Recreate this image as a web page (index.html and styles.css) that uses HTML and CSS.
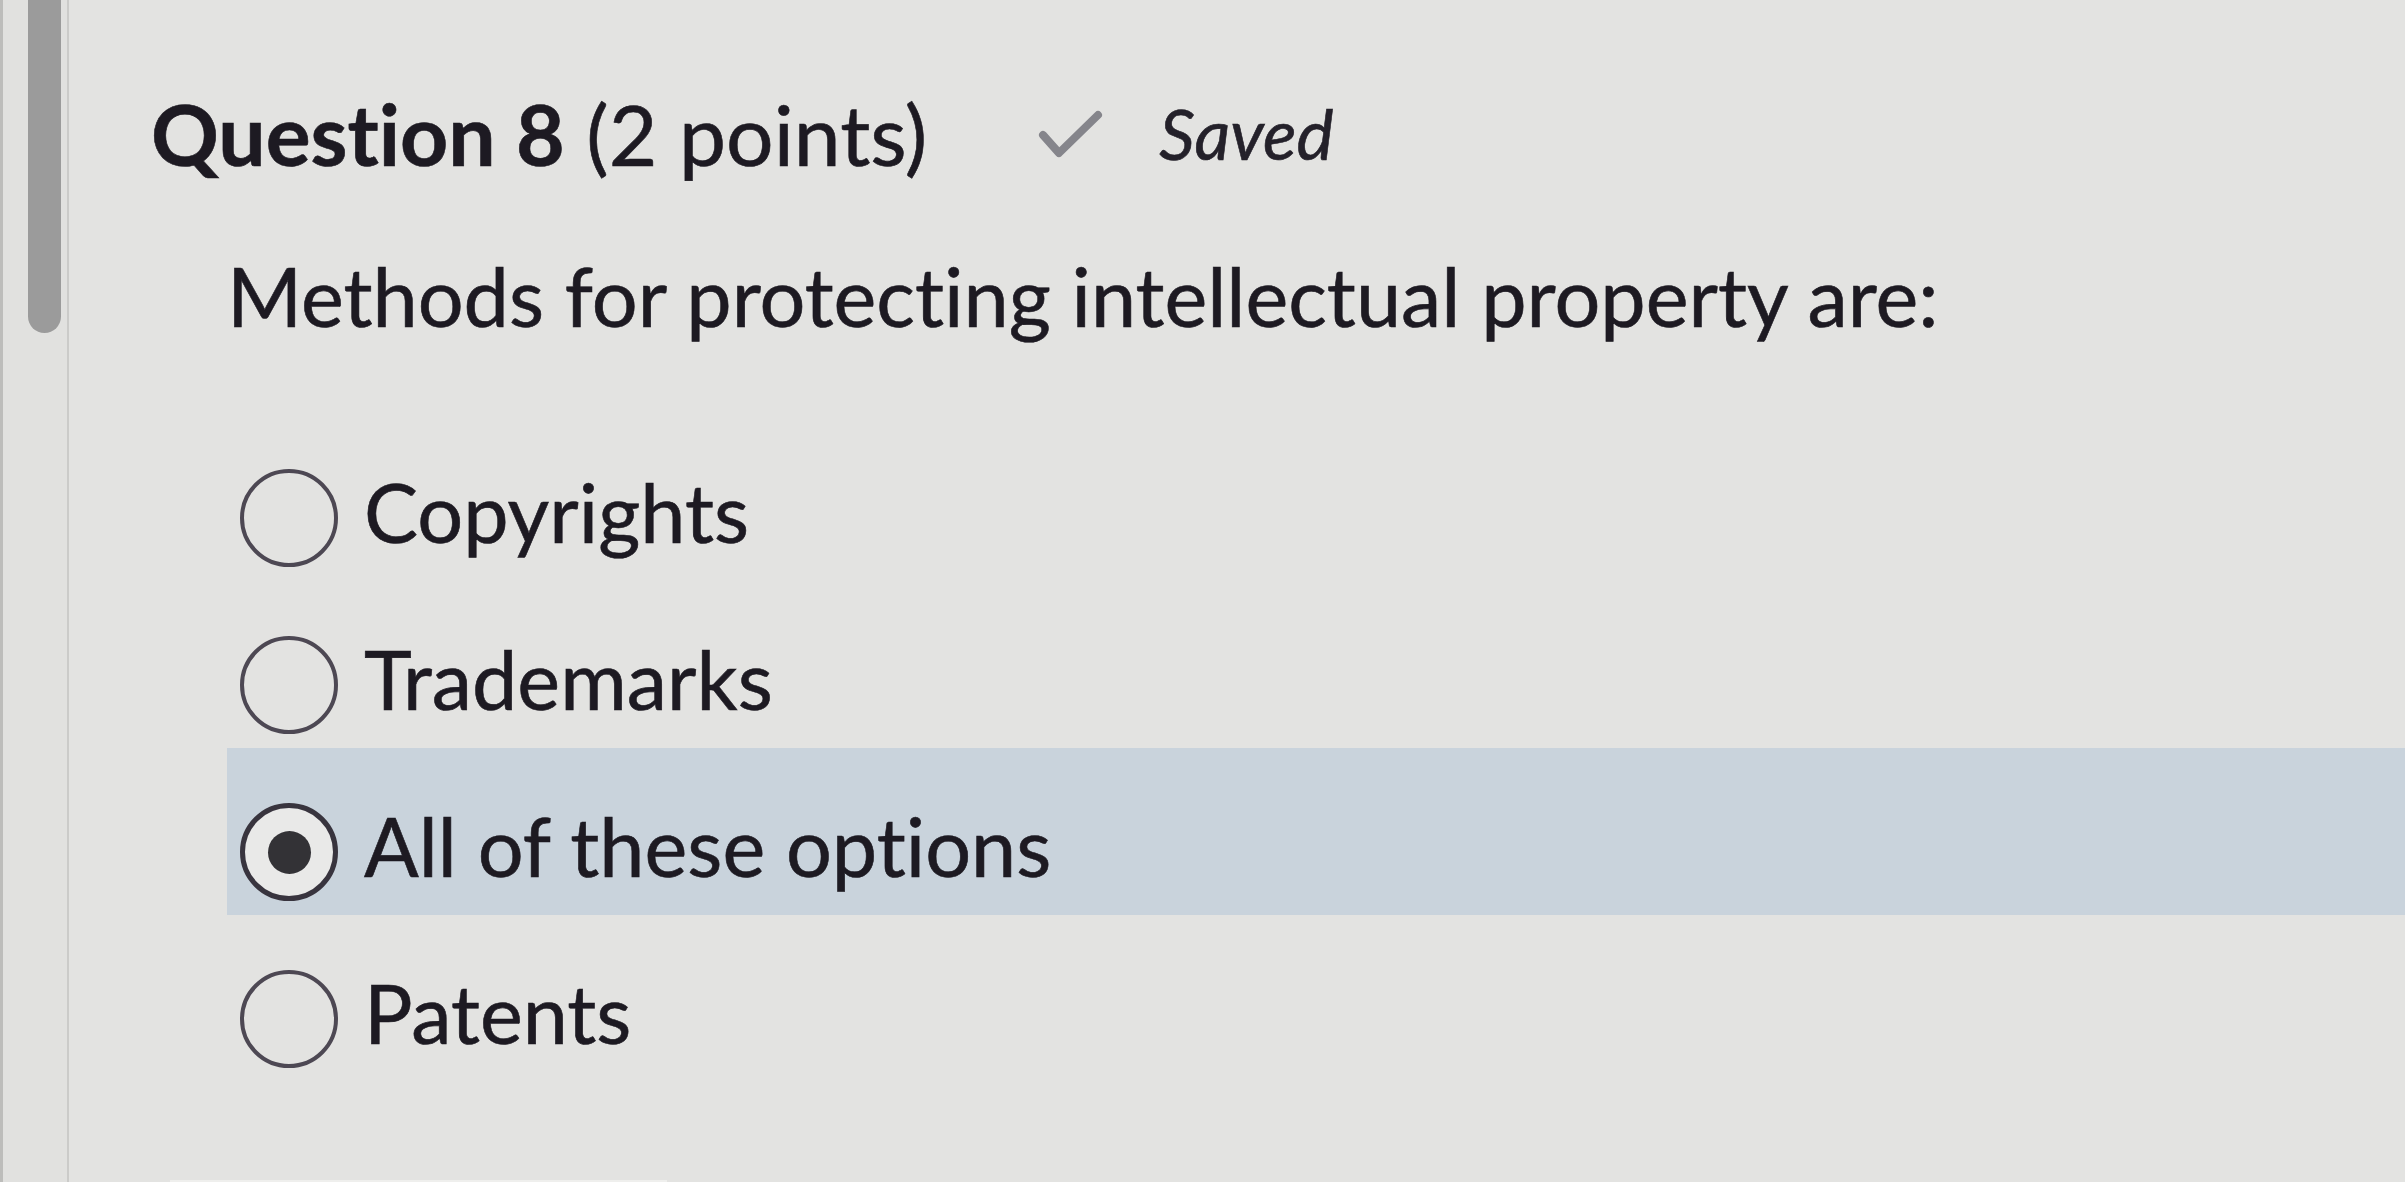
FILE: index.html
```html
<!DOCTYPE html>
<html lang="en">
<head>
<meta charset="utf-8">
<title>Question 8</title>
<link rel="stylesheet" href="styles.css">
</head>
<body>
<div class="page">
  <div class="scrollbar"><div class="thumb"></div></div>
  <main class="main">
    <header class="qhead">
      <h2 class="qtitle"><span class="qnum">Question 8</span> <span class="qpts">(2 points)</span></h2>
      <svg class="check" width="66" height="54" viewBox="0 0 66 54" aria-hidden="true">
        <polyline points="6,28 22,46 61,8" fill="none" stroke="#85858b" stroke-width="8" stroke-linecap="round" stroke-linejoin="round"/>
      </svg>
      <span class="saved">Saved</span>
    </header>
    <p class="prompt">Methods for protecting intellectual property are:</p>
    <ul class="options">
      <li class="option"><span class="radio"></span><span class="label">Copyrights</span></li>
      <li class="option"><span class="radio"></span><span class="label">Trademarks</span></li>
      <li class="option selected"><span class="radio"><span class="dot"></span></span><span class="label">All of these options</span></li>
      <li class="option"><span class="radio"></span><span class="label">Patents</span></li>
    </ul>
    <div class="next-strip"></div>
  </main>
</div>
</body>
</html>
```

FILE: styles.css
```css
html, body {
  margin: 0;
  padding: 0;
  height: 100%;
  overflow: hidden;
}
body {
  background: #e3e3e1;
  font-family: "Lato", "Liberation Sans", sans-serif;
  font-variant-ligatures: none;
  font-feature-settings: "liga" 0, "clig" 0;
  color: #1d1a22;
  -webkit-text-stroke: 0.6px #1d1a22;
}
.page {
  display: flex;
  height: 1182px;
}
.scrollbar {
  width: 64px;
  flex: 0 0 64px;
  background: #e1e1df;
  border-left: 3px solid #bdbdbb;
  border-right: 2px solid #cbcbc9;
  box-sizing: content-box;
}
.thumb {
  margin-left: 25px;
  width: 33px;
  height: 333px;
  background: #9b9b9b;
  border-radius: 0 0 17px 17px;
}
.main {
  flex: 1;
  padding-top: 85px;
  display: flex;
  flex-direction: column;
  min-width: 0;
}
.qhead {
  display: flex;
  align-items: center;
  padding-left: 82px;
  height: 97px;
}
.qtitle {
  margin: 0;
  font-size: 84px;
  line-height: 97px;
  font-weight: 400;
  white-space: nowrap;
}
.qnum {
  font-weight: 700;
}
.check {
  margin-left: 110px;
  flex: 0 0 auto;
}
.saved {
  margin-left: 56px;
  font-size: 70px;
  line-height: 97px;
  font-style: italic;
  color: #24212a;
  -webkit-text-stroke: 0.6px #24212a;
}
.prompt {
  margin: 66px 0 0 0;
  padding-left: 158px;
  font-size: 81px;
  line-height: 96px;
  white-space: nowrap;
}
.options {
  list-style: none;
  margin: 70px 0 0 0;
  padding: 0 0 0 158px;
}
.option {
  display: flex;
  align-items: flex-start;
  height: 167px;
  padding-top: 55px;
  box-sizing: border-box;
}
.option.selected {
  background: #c9d3dc;
}
.radio {
  flex: 0 0 auto;
  width: 98px;
  height: 98px;
  box-sizing: border-box;
  margin-left: 13px;
  border: 4px solid #4d4853;
  border-radius: 50%;
  display: flex;
  align-items: center;
  justify-content: center;
}
.option.selected .radio {
  border: 5px solid #38343e;
  background: #e9e9e8;
}
.dot {
  width: 43px;
  height: 43px;
  border-radius: 50%;
  background: #333236;
}
.label {
  margin-left: 26px;
  margin-top: -6px;
  font-size: 81px;
  line-height: 98px;
  white-space: nowrap;
}
.next-strip {
  margin: 98px 0 0 101px;
  width: 497px;
  height: 10px;
  background: #efefed;
}
```
